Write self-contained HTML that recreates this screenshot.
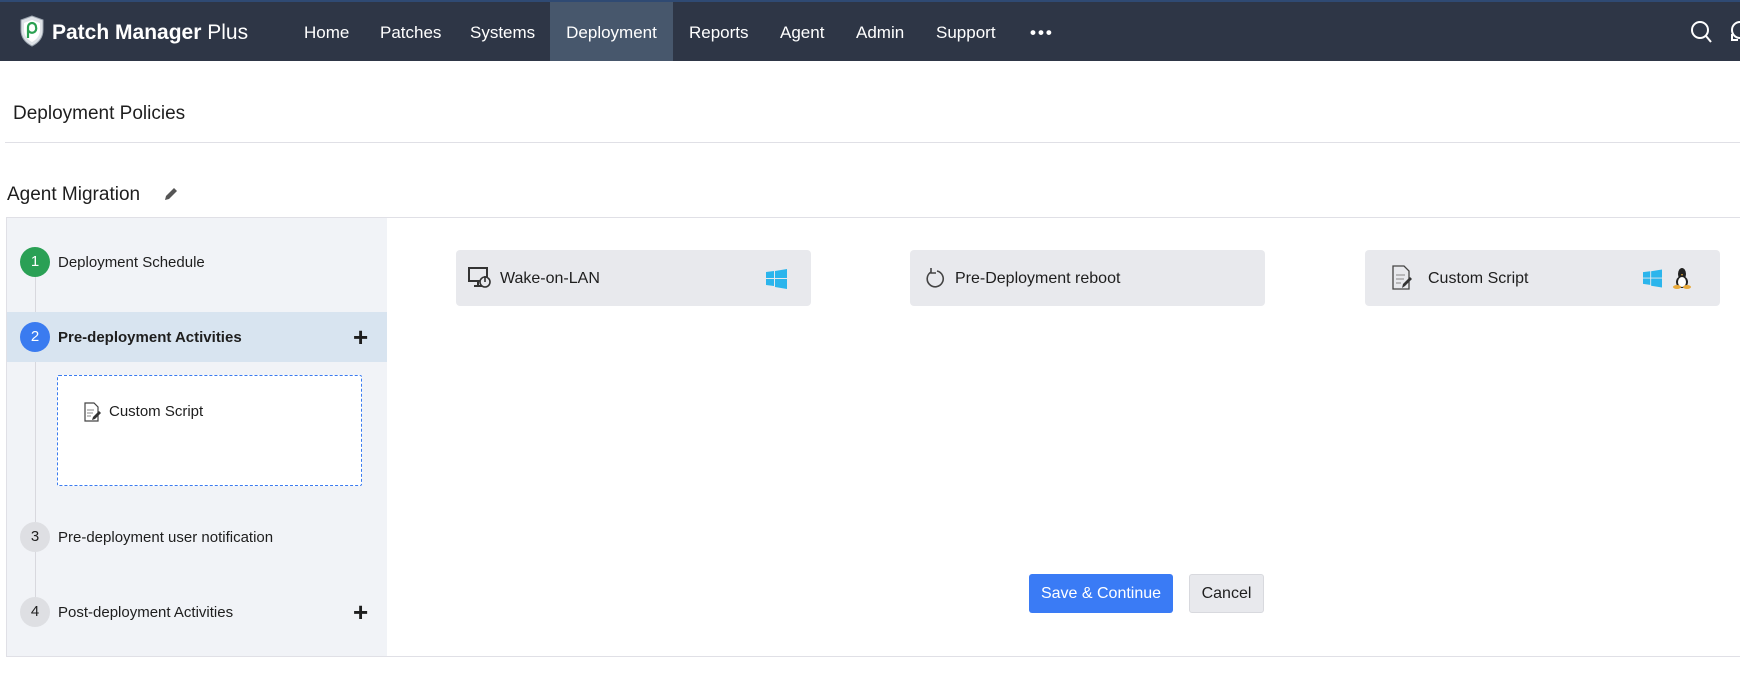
<!DOCTYPE html>
<html><head><meta charset="utf-8"><style>
*{margin:0;padding:0;box-sizing:border-box}
body{width:1740px;height:690px;background:#fff;font-family:"Liberation Sans",sans-serif;color:#1e1e1e;position:relative;overflow:hidden}
.a{position:absolute}
.nav{left:0;top:0;width:1740px;height:61px;background:#2e3646;border-top:2px solid #2f4a73}
.ni{top:0;height:59px;line-height:61px;color:#fff;font-size:17px}
.t{white-space:nowrap}
.circ{width:30px;height:30px;border-radius:50%;text-align:center;line-height:30px;font-size:15px}
.card{height:56px;background:#e8e9ed;border-radius:4px;top:250px}
.card span{position:absolute;top:1px;line-height:56px;font-size:16px}
.plus{font-size:26px;line-height:28px;font-weight:bold}
</style></head><body>
<div class="a nav">
 <svg class="a" style="left:19px;top:13px" width="26" height="32" viewBox="0 0 26 32"><path d="M13 1L2 5v10c0 8 5 13 11 16 6-3 11-8 11-16V5z" fill="#dfe3e8" stroke="#9aa3ad"/><path d="M13 5L5 8v7c0 6 4 10 8 12 4-2 8-6 8-12V8z" fill="#fff"/><path d="M9 23V12a4 4 0 018 0 4 4 0 01-8 3" fill="none" stroke="#2aa051" stroke-width="2.2"/></svg>
 <div class="a ni t" style="left:52px;font-size:21px;font-weight:bold">Patch Manager <span style="font-weight:normal">Plus</span></div>
 <div class="a ni" style="left:304px">Home</div>
 <div class="a ni" style="left:380px">Patches</div>
 <div class="a ni" style="left:470px">Systems</div>
 <div class="a ni" style="left:550px;width:123px;background:#47576c;text-align:center">Deployment</div>
 <div class="a ni" style="left:689px">Reports</div>
 <div class="a ni" style="left:780px">Agent</div>
 <div class="a ni" style="left:856px">Admin</div>
 <div class="a ni" style="left:936px">Support</div>
 <div class="a ni" style="left:1030px;font-weight:bold;letter-spacing:2px">•••</div>
 <svg class="a" style="left:1690px;top:18px" width="24" height="26" viewBox="0 0 24 26"><circle cx="10" cy="10" r="8" fill="none" stroke="#fff" stroke-width="2"/><path d="M16 16l5 6" stroke="#fff" stroke-width="2"/></svg>
 <svg class="a" style="left:1728px;top:18px" width="12" height="26" viewBox="0 0 12 26"><circle cx="12" cy="10" r="8" fill="none" stroke="#fff" stroke-width="2"/><path d="M4 14v6h6" fill="none" stroke="#fff" stroke-width="2"/></svg>
</div>
<div class="a t" style="left:13px;top:103px;font-size:19px">Deployment Policies</div>
<div class="a" style="left:5px;top:142px;width:1735px;height:1px;background:#e0e0e6"></div>
<div class="a t" style="left:7px;top:184px;font-size:19px">Agent Migration</div>
<svg class="a" style="left:163px;top:186px" width="16" height="16" viewBox="0 0 16 16"><path d="M2 14l1-4 8-8 3 3-8 8z" fill="#555"/></svg>
<div class="a" style="left:6px;top:217px;width:1734px;height:440px;border:1px solid #e0e0e6;border-right:none"></div>
<div class="a" style="left:7px;top:218px;width:380px;height:438px;background:#f1f3f7"></div>
<div class="a" style="left:35px;top:262px;width:1px;height:350px;background:#d8d8de"></div>
<div class="a" style="left:7px;top:312px;width:380px;height:50px;background:#d8e4f0"></div>
<div class="a circ" style="left:20px;top:247px;background:#2aa055;color:#fff">1</div>
<div class="a t" style="left:58px;top:254px;font-size:15px">Deployment Schedule</div>
<div class="a circ" style="left:20px;top:322px;background:#3a7bf0;color:#fff">2</div>
<div class="a t" style="left:58px;top:329px;font-size:15px;font-weight:bold">Pre-deployment Activities</div>
<div class="a plus" style="left:353px;top:323px">+</div>
<div class="a" style="left:57px;top:375px;width:305px;height:111px;background:#fff;border:1px dashed #3a7bf0;border-radius:2px"></div>
<svg class="a" style="left:83px;top:402px" width="18" height="20" viewBox="0 0 18 20"><path d="M2 1h9l4 4v14H2z" fill="none" stroke="#444" stroke-width="1.2"/><path d="M4 8h7M4 11h6M4 14h4" stroke="#888"/><path d="M9 18l1-3 6-6 2 2-6 6z" fill="#333"/></svg>
<div class="a t" style="left:109px;top:403px;font-size:15px">Custom Script</div>
<div class="a circ" style="left:20px;top:522px;background:#dedfe3">3</div>
<div class="a t" style="left:58px;top:529px;font-size:15px">Pre-deployment user notification</div>
<div class="a circ" style="left:20px;top:597px;background:#dedfe3">4</div>
<div class="a t" style="left:58px;top:604px;font-size:15px">Post-deployment Activities</div>
<div class="a plus" style="left:353px;top:598px">+</div>

<div class="a card" style="left:456px;width:355px">
 <svg class="a" style="left:12px;top:16px" width="24" height="24" viewBox="0 0 24 24"><rect x="1" y="2" width="18" height="13" fill="none" stroke="#333" stroke-width="2"/><path d="M6 20h8M10 15v5" stroke="#333" stroke-width="2"/><circle cx="17" cy="16" r="5" fill="#e8e9ed" stroke="#333" stroke-width="1.6"/><path d="M17 10v6" stroke="#333" stroke-width="1.6"/></svg>
 <span style="left:44px">Wake-on-LAN</span>
 <svg class="a" style="left:310px;top:19px" width="21" height="20" viewBox="0 0 21 20"><path d="M0 3l8-1v7H0zM9 2l12-2v9H9zM0 10h8v7l-8-1zM9 10h12v10l-12-2z" fill="#2bb5ec"/></svg>
</div>
<div class="a card" style="left:910px;width:355px">
 <svg class="a" style="left:15px;top:17px" width="20" height="22" viewBox="0 0 20 22"><path d="M6 5a8 8 0 1 0 6-1" fill="none" stroke="#444" stroke-width="1.6"/><path d="M6 1v5h5" fill="none" stroke="#444" stroke-width="1.6"/></svg>
 <span style="left:45px">Pre-Deployment reboot</span>
</div>
<div class="a card" style="left:1365px;width:355px">
 <svg class="a" style="left:26px;top:15px" width="22" height="26" viewBox="0 0 22 26"><path d="M2 1h11l5 5v18H2z" fill="none" stroke="#444" stroke-width="1.3"/><path d="M5 10h9M5 14h8M5 18h5" stroke="#888"/><path d="M11 23l1-4 7-7 2 2-7 7z" fill="#333"/></svg>
 <span style="left:63px">Custom Script</span>
 <svg class="a" style="left:278px;top:19px" width="19" height="19" viewBox="0 0 21 20"><path d="M0 3l8-1v7H0zM9 2l12-2v9H9zM0 10h8v7l-8-1zM9 10h12v10l-12-2z" fill="#2bb5ec"/></svg>
 <svg class="a" style="left:308px;top:17px" width="18" height="22" viewBox="0 0 18 22"><ellipse cx="9" cy="7" rx="4" ry="6" fill="#222"/><ellipse cx="9" cy="15" rx="6" ry="6" fill="#222"/><ellipse cx="9" cy="15" rx="4" ry="5" fill="#fff"/><path d="M8 7l1 2 1-2z" fill="#e8a93a"/><ellipse cx="4" cy="20" rx="4" ry="2" fill="#e8a93a"/><ellipse cx="14" cy="20" rx="4" ry="2" fill="#e8a93a"/></svg>
</div>
<div class="a t" style="left:1029px;top:574px;width:144px;height:39px;background:#3a7bf5;border-radius:3px;color:#fff;text-align:center;line-height:40px;font-size:16px">Save &amp; Continue</div>
<div class="a t" style="left:1189px;top:574px;width:75px;height:39px;background:#e8e9ed;border:1px solid #d8d9de;border-radius:3px;text-align:center;line-height:38px;font-size:16px">Cancel</div>
</body></html>
